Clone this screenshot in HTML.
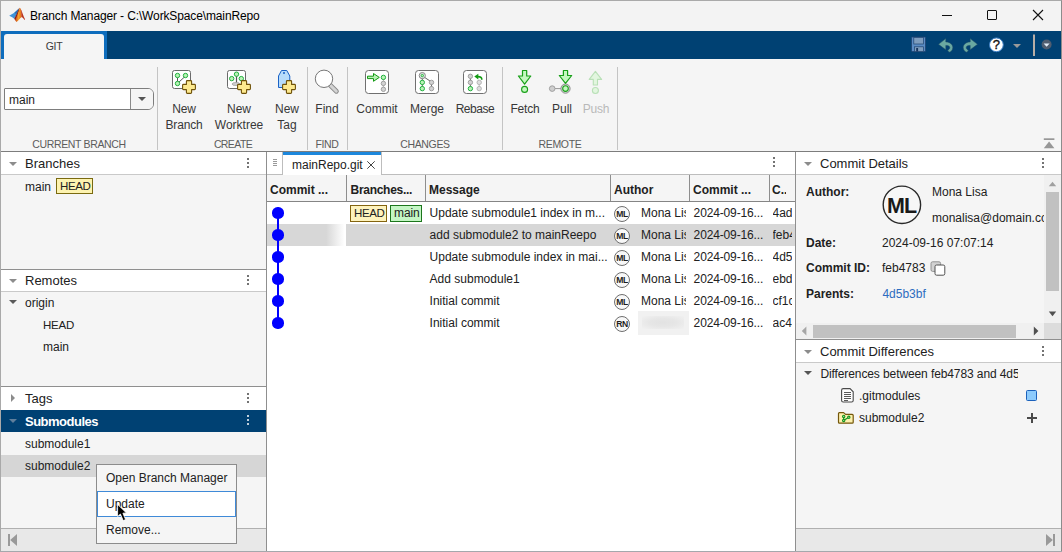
<!DOCTYPE html>
<html lang="en">
<head>
<meta charset="utf-8">
<title>Branch Manager - C:\WorkSpace\mainRepo</title>
<style>
*{box-sizing:border-box;margin:0;padding:0}
html,body{width:1062px;height:552px;overflow:hidden;background:#f3f3f3}
body{font-family:"Liberation Sans",sans-serif;font-size:12px;color:#212121;position:relative}
.abs{position:absolute}
.t{position:absolute;white-space:nowrap;line-height:1}
#win{position:absolute;left:0;top:0;width:1062px;height:552px;background:#f3f3f3;border:1px solid #a9a9a9;border-right-color:#8c8c8c;border-bottom-color:#8c8c8c}
/* title bar */
#title{left:30px;top:10px;font-size:12px;color:#000;letter-spacing:-0.13px}
/* blue strip */
#strip{left:1px;top:31px;width:1060px;height:28px;background:#004173}
#tab{left:1px;top:31px;width:106px;height:28px;background:#0e6dbd}
#tabin{left:4px;top:34px;width:100px;height:25px;background:#f5f5f5;border-radius:3px 3px 0 0}
#tabtxt{left:4px;width:100px;top:41px;text-align:center;font-size:10.5px;color:#3a3a3a;letter-spacing:-0.3px}
/* toolstrip */
#tool{left:1px;top:59px;width:1060px;height:93px;background:#f5f5f5;border-bottom:1px solid #7d7d7d}
.vsep{position:absolute;top:67px;height:83px;width:1px;background:#c4c4c4}
.glabel{position:absolute;top:139px;font-size:10.5px;color:#5c5c5c;white-space:nowrap;text-align:center;line-height:1;letter-spacing:-0.35px}
.blabel{position:absolute;font-size:12px;color:#383838;white-space:nowrap;text-align:center;line-height:16px}
/* panels */
.phead{position:absolute;height:23px;background:#fff;border-bottom:1px solid #c9c9c9}
.phead .ttl{position:absolute;left:24px;top:4px;font-size:13px;line-height:16px;color:#212121;white-space:nowrap}
.dots{position:absolute;width:2px;height:2px;background:#444;border-radius:1px;box-shadow:0 4px 0 #444,0 8px 0 #444}
.tri-d{position:absolute;width:0;height:0;border-left:4px solid transparent;border-right:4px solid transparent;border-top:4px solid #8c8c8c}
.tri-r{position:absolute;width:0;height:0;border-top:4px solid transparent;border-bottom:4px solid transparent;border-left:4px solid #8c8c8c}
.item{position:absolute;font-size:12px;white-space:nowrap;line-height:16px;color:#212121}

.dot{margin:0.4px 0 0 0.4px;width:11.2px;height:11.2px;border-radius:50%;background:#0000ff}
.av{margin:-0.5px 0 0 0.1px;width:16px;height:16px;border-radius:50%;border:1px solid #6e6e6e;background:#f8f8f8;font-size:8.6px;font-weight:bold;text-align:center;line-height:15px;color:#1e1e1e;letter-spacing:-0.45px;text-indent:-0.3px}
.b{font-weight:bold}
.tg{font-size:11.5px;letter-spacing:-0.35px}
.dt{letter-spacing:-0.14px}
.th{margin-top:0.5px}
</style>
</head>
<body>
<div id="win">
</div>
<!-- TITLE BAR -->
<svg class="abs" style="left:8px;top:6px" width="19" height="18" viewBox="8 6 19 18">
  <defs><linearGradient id="lgo" x1="0" y1="0" x2="1" y2="0"><stop offset="0" stop-color="#c8421a"/><stop offset="0.5" stop-color="#f5a32a"/><stop offset="1" stop-color="#e0611c"/></linearGradient></defs>
  <path d="M9.2 15.7 L14.3 12.8 L19 8.6 L17.6 13.2 L14.2 18.7 L12.2 17.3 Z" fill="#3f93d8"/>
  <path d="M14.3 12.8 L19 8.6 L16.4 14 Z" fill="#2a6fb4"/>
  <path d="M19 8.6 L19.8 7.7 L18.2 15.5 L15.4 20.4 L14.2 18.7 L16.6 14 Z" fill="#8f201b"/>
  <path d="M19.8 7.7 C20.6 7.7 21 10 21.6 12.2 L21.8 17 C20 18 18.3 21 16.4 22 L15.2 20.3 C17.3 16 18.6 11.4 19.8 7.7 Z" fill="url(#lgo)"/>
  <path d="M20.4 8.3 C22 11 23.4 16.8 25 19.2 L24.5 19.9 C23.5 18.5 22.6 17.5 21.6 17 L21.2 11.5 Z" fill="#b8331f"/>
</svg>
<div class="t" id="title">Branch Manager - C:\WorkSpace\mainRepo</div>
<!-- window controls -->
<div class="abs" style="left:942px;top:15px;width:10px;height:1px;background:#111"></div>
<div class="abs" style="left:987px;top:10px;width:10px;height:10px;border:1px solid #111;border-radius:1px"></div>
<svg class="abs" style="left:1032px;top:9px" width="12" height="12" viewBox="0 0 12 12"><path d="M1 1 L11 11 M11 1 L1 11" stroke="#111" stroke-width="1.1" fill="none"/></svg>

<!-- BLUE STRIP -->
<div class="abs" id="strip"></div>
<div class="abs" id="tab"></div>
<div class="abs" id="tabin"></div>
<div class="t" id="tabtxt">GIT</div>

<!-- TOOLSTRIP -->
<div class="abs" id="tool"></div>


<!-- combo -->
<div class="abs" style="left:4px;top:88px;width:150px;height:22px;background:#fff;border:1px solid #7d7d7d;border-radius:1px 6px 6px 1px"></div>
<div class="abs" style="left:130px;top:89px;width:23px;height:20px;background:#f5f5f5;border-left:1px solid #8a8a8a;border-radius:0 5px 5px 0"></div>
<div class="abs" style="left:138px;top:97px;width:0;height:0;border-left:4px solid transparent;border-right:4px solid transparent;border-top:4px solid #555"></div>
<div class="t" style="left:9px;top:94px;font-size:12px;color:#1e1e1e">main</div>
<div class="vsep" style="left:157px"></div>
<div class="vsep" style="left:307px"></div>
<div class="vsep" style="left:347px"></div>
<div class="vsep" style="left:502px"></div>
<div class="vsep" style="left:617px"></div>
<div class="glabel" style="left:29px;width:100px">CURRENT BRANCH</div>
<div class="glabel" style="left:183px;width:100px;letter-spacing:-0.6px">CREATE</div>
<div class="glabel" style="left:277px;width:100px">FIND</div>
<div class="glabel" style="left:375px;width:100px">CHANGES</div>
<div class="glabel" style="left:510px;width:100px">REMOTE</div>
<div class="blabel" style="left:144px;width:80px;top:101px;letter-spacing:-0.15px">New<br>Branch</div>
<div class="blabel" style="left:199px;width:80px;top:101px">New<br>Worktree</div>
<div class="blabel" style="left:247px;width:80px;top:101px">New<br>Tag</div>
<div class="blabel" style="left:287px;width:80px;top:101px">Find</div>
<div class="blabel" style="left:337px;width:80px;top:101px">Commit</div>
<div class="blabel" style="left:387px;width:80px;top:101px">Merge</div>
<div class="blabel" style="left:435px;width:80px;top:101px;letter-spacing:-0.45px">Rebase</div>
<div class="blabel" style="left:485px;width:80px;top:101px;letter-spacing:-0.2px">Fetch</div>
<div class="blabel" style="left:522px;width:80px;top:101px">Pull</div>
<div class="blabel" style="left:556px;width:80px;top:101px;color:#b9b9b9;letter-spacing:-0.2px">Push</div>


<!-- toolbar icons -->
<svg class="abs" style="left:160px;top:62px" width="470" height="40" viewBox="160 62 470 40">
<!-- new branch -->
<rect x="172.5" y="70.5" width="18" height="18" rx="2" fill="#fff" stroke="#6a6a6a"/>
<path d="M177.5 77.5 V81.5 M185 76.5 L178.5 82.5" stroke="#555" stroke-width="1" fill="none"/>
<circle cx="177.5" cy="75.5" r="2.2" fill="#b9f2b5" stroke="#21b13f" stroke-width="1"/><circle cx="185.5" cy="75.5" r="2.2" fill="#b9f2b5" stroke="#21b13f" stroke-width="1"/><circle cx="177.5" cy="83.5" r="2.2" fill="#b9f2b5" stroke="#21b13f" stroke-width="1"/>
<path d="M187.3 80.6 H190.7 Q191.6 80.6 191.6 81.5 V84.4 H194.5 Q195.4 84.4 195.4 85.3 V88.7 Q195.4 89.6 194.5 89.6 H191.6 V92.5 Q191.6 93.4 190.7 93.4 H187.3 Q186.4 93.4 186.4 92.5 V89.6 H183.5 Q182.6 89.6 182.6 88.7 V85.3 Q182.6 84.4 183.5 84.4 H186.4 V81.5 Q186.4 80.6 187.3 80.6 Z" fill="#fde98e" stroke="#6f5108" stroke-width="1.1" stroke-linejoin="round"/>
<!-- new worktree -->
<rect x="227.5" y="70.5" width="18" height="18" rx="2" fill="#fff" stroke="#6a6a6a"/>
<path d="M236.5 76 V83" stroke="#555" stroke-width="1.2" fill="none"/>
<ellipse cx="236" cy="84" rx="4" ry="1.5" fill="#cfcfcf" stroke="#a5a5a5" stroke-width="0.8"/>
<circle cx="236.5" cy="74.2" r="2.2" fill="#b9f2b5" stroke="#21b13f" stroke-width="1"/><circle cx="231.7" cy="78.6" r="2.2" fill="#b9f2b5" stroke="#21b13f" stroke-width="1"/><circle cx="241.3" cy="78.6" r="2.2" fill="#b9f2b5" stroke="#21b13f" stroke-width="1"/>
<path d="M242.3 80.6 H245.7 Q246.6 80.6 246.6 81.5 V84.4 H249.5 Q250.4 84.4 250.4 85.3 V88.7 Q250.4 89.6 249.5 89.6 H246.6 V92.5 Q246.6 93.4 245.7 93.4 H242.3 Q241.4 93.4 241.4 92.5 V89.6 H238.5 Q237.6 89.6 237.6 88.7 V85.3 Q237.6 84.4 238.5 84.4 H241.4 V81.5 Q241.4 80.6 242.3 80.6 Z" fill="#fde98e" stroke="#6f5108" stroke-width="1.1" stroke-linejoin="round"/>
<!-- new tag -->
<path d="M278.5 87.5 V76 L281.5 70.5 H286.8 L289.8 76 V87.5 Z" fill="#b7dcfb" stroke="#1a62c6" stroke-width="1" stroke-linejoin="round"/>
<circle cx="284" cy="73" r="1" fill="#1a62c6"/>
<path d="M287.3 80.6 H290.7 Q291.6 80.6 291.6 81.5 V84.4 H294.5 Q295.4 84.4 295.4 85.3 V88.7 Q295.4 89.6 294.5 89.6 H291.6 V92.5 Q291.6 93.4 290.7 93.4 H287.3 Q286.4 93.4 286.4 92.5 V89.6 H283.5 Q282.6 89.6 282.6 88.7 V85.3 Q282.6 84.4 283.5 84.4 H286.4 V81.5 Q286.4 80.6 287.3 80.6 Z" fill="#fde98e" stroke="#6f5108" stroke-width="1.1" stroke-linejoin="round"/>
<!-- find -->
<path d="M330 85 L336.4 91.3" stroke="#8a8a8a" stroke-width="4.8" stroke-linecap="round"/>
<path d="M330.3 85.3 L336.3 91.2" stroke="#d4d4d4" stroke-width="3" stroke-linecap="round"/>
<circle cx="324" cy="78.8" r="8.7" fill="#fff" stroke="#777" stroke-width="1"/>
<!-- commit -->
<rect x="365.5" y="70.5" width="23" height="23" rx="3" fill="#fff" stroke="#707070"/>
<path d="M367.5 76.2 H373.5 V73.5 L379.3 77.4 L373.5 81.3 V78.6 H367.5 Z" fill="#b9f2b5" stroke="#129a12" stroke-width="1" stroke-linejoin="round"/>
<path d="M383.4 79 V88" stroke="#bbb" stroke-width="1"/>
<circle cx="383.4" cy="77.4" r="2.2" fill="#b9f2b5" stroke="#21b13f" stroke-width="1"/><circle cx="383.4" cy="83.4" r="2.2" fill="#d2d2d2" stroke="#a0a0a0" stroke-width="1"/><circle cx="383.4" cy="89.3" r="2.2" fill="#d2d2d2" stroke="#a0a0a0" stroke-width="1"/>
<!-- merge -->
<rect x="415.5" y="70.5" width="23" height="23" rx="3" fill="#fff" stroke="#707070"/>
<path d="M422.3 76 V88 M424 77 L431.5 82 V88" stroke="#666" stroke-width="1" fill="none"/>
<circle cx="422.3" cy="75.6" r="3.1" fill="#e4e4e4" stroke="#8a8a8a"/><circle cx="422.3" cy="75.6" r="1.2" fill="#b9f2b5" stroke="#21b13f" stroke-width="0.9"/>
<circle cx="422.3" cy="82.4" r="2.2" fill="#b9f2b5" stroke="#21b13f" stroke-width="1"/><circle cx="422.3" cy="88.6" r="2.2" fill="#b9f2b5" stroke="#21b13f" stroke-width="1"/>
<circle cx="431.5" cy="82.4" r="2.2" fill="#d2d2d2" stroke="#a0a0a0" stroke-width="1"/><circle cx="431.5" cy="88.6" r="2.2" fill="#d2d2d2" stroke="#a0a0a0" stroke-width="1"/>
<!-- rebase -->
<rect x="463.5" y="70.5" width="23" height="23" rx="3" fill="#fff" stroke="#707070"/>
<path d="M470.4 77 V88" stroke="#666" stroke-width="1"/><path d="M479.2 83 V88" stroke="#bbb" stroke-width="1"/>
<circle cx="470.4" cy="76.3" r="2.2" fill="#d2d2d2" stroke="#a0a0a0" stroke-width="1"/><circle cx="470.4" cy="82.4" r="2.2" fill="#d2d2d2" stroke="#a0a0a0" stroke-width="1"/><circle cx="470.4" cy="88.6" r="2.2" fill="#b9f2b5" stroke="#21b13f" stroke-width="1"/>
<circle cx="479.2" cy="82.4" r="2.2" fill="#dedede" stroke="#b5b5b5"/><circle cx="479.2" cy="88.6" r="2.2" fill="#dedede" stroke="#b5b5b5"/>
<path d="M481.8 79.8 Q482 76.6 478 76.6" stroke="#129a12" stroke-width="1.6" fill="none"/>
<path d="M474.3 76.6 L478.3 73.8 V79.4 Z" fill="#129a12"/>
<!-- fetch -->
<path d="M522.5 70.5 H526.7 V76 H530.8 L524.6 84.2 L518.4 76 H522.5 Z" fill="#c3f8bf" stroke="#18a018" stroke-width="1.2" stroke-linejoin="round"/>
<circle cx="524.6" cy="89.4" r="3" fill="#c3f8bf" stroke="#18a018" stroke-width="1.1"/>
<!-- pull -->
<path d="M555 88.6 H561" stroke="#999" stroke-width="1"/>
<circle cx="552.2" cy="88.6" r="2.8" fill="#cfcfcf" stroke="#a0a0a0"/>
<circle cx="565.5" cy="88.6" r="4.6" fill="#d9d9d9" stroke="#8a8a8a"/>
<circle cx="565.5" cy="88.6" r="2.8" fill="#c3f8bf" stroke="#18a018" stroke-width="1.1"/>
<path d="M563.4 70.5 H567.6 V75.5 H571.7 L565.5 83.4 L559.3 75.5 H563.4 Z" fill="#c3f8bf" stroke="#18a018" stroke-width="1.2" stroke-linejoin="round"/>
<!-- push -->
<path d="M593.3 85 H597.5 V79.4 H601.6 L595.4 71.4 L589.2 79.4 H593.3 Z" fill="#e2f6df" stroke="#b9e0b7" stroke-width="1.1" stroke-linejoin="round"/>
<circle cx="595.4" cy="90.5" r="3" fill="#e2f6df" stroke="#b9e0b7" stroke-width="1.1"/>
</svg>
<!-- collapse icon -->
<svg class="abs" style="left:1043px;top:138px" width="12" height="11" viewBox="0 0 12 11"><rect x="0.8" y="0.3" width="10.6" height="1.7" fill="#979797"/><path d="M6.1 3.6 L11.4 10.2 H0.8 Z" fill="#979797"/></svg>
<!-- quick access -->
<svg class="abs" style="left:905px;top:32px" width="156" height="26" viewBox="905 32 156 26">
<rect x="911.5" y="37" width="14" height="14.6" rx="0.8" fill="#5b8cc4" stroke="#1f426e" stroke-width="0.8"/>
<rect x="913.8" y="37.4" width="9.6" height="6.6" fill="#7e9dbe" stroke="#1f426e" stroke-width="0.7"/>
<rect x="914.6" y="46.8" width="8.8" height="4.8" fill="#7e9dbe" stroke="#1f426e" stroke-width="0.7"/>
<rect x="916.2" y="48" width="1.9" height="3.4" fill="#14335c"/>
<path d="M938.5 44.3 L945.8 38.6 V42 C950 42 952.8 44.5 952.8 47.5 C952.8 50 951 51.8 949 52.3 L947.6 50.2 C949 49.6 949.8 48.7 949.8 47.5 C949.8 46 948.3 45.4 945.8 45.4 V49.8 Z" fill="#6aa9a1" stroke="#1f4a66" stroke-width="0.5"/>
<path d="M 977.5 44.3 L 970.2 38.6 V 42.0 C 966.0 42.0 963.2 44.5 963.2 47.5 C 963.2 50.0 965.0 51.8 967.0 52.3 L 968.4 50.2 C 967.0 49.6 966.2 48.7 966.2 47.5 C 966.2 46.0 967.7 45.4 970.2 45.4 V 49.8 Z" fill="#6aa9a1" stroke="#1f4a66" stroke-width="0.5"/>
<circle cx="996.4" cy="44.8" r="6.9" fill="#fff" stroke="#3d7fc4" stroke-width="1"/>
<text x="996.4" y="49.4" text-anchor="middle" font-family="Liberation Sans, sans-serif" font-size="13" fill="#111" stroke="#111" stroke-width="0.35">?</text>
<path d="M1013 44 H1021 L1017 48 Z" fill="#9a9a9a"/>
<rect x="1033" y="34.5" width="2" height="21.5" fill="#b8aea6"/>
<circle cx="1046.6" cy="44.5" r="5" fill="#505d70"/>
<path d="M1043.6 43.4 H1049.6 L1046.6 46.8 Z" fill="#e4eefa"/>
</svg>

<!-- LEFT PANEL -->
<div class="abs" style="left:1px;top:152px;width:265px;height:399px;background:#f5f5f5"></div>
<div class="abs" style="left:266px;top:152px;width:1px;height:399px;background:#8f8f8f"></div>
<div class="phead" style="left:1px;top:152px;width:265px"><div class="tri-d" style="left:8px;top:10px"></div><div class="ttl">Branches</div><div class="dots" style="left:246px;top:6px"></div></div>
<div class="item" style="left:25px;top:179px">main</div>
<div class="abs" style="left:56px;top:178px;width:37px;height:16px;background:#fdf3b0;border:1px solid #7a6a10"></div>
<div class="item tg" style="left:60px;top:178px">HEAD</div>

<div class="phead" style="left:1px;top:269px;width:265px;border-top:1px solid #8f8f8f;height:23px"><div class="tri-d" style="left:8px;top:9px"></div><div class="ttl" style="top:3px">Remotes</div><div class="dots" style="left:246px;top:5px"></div></div>
<div class="tri-d" style="left:9px;top:300px;border-top-color:#5a5a5a"></div>
<div class="item" style="left:25px;top:295px">origin</div>
<div class="item tg" style="left:43px;top:317px;letter-spacing:-0.25px">HEAD</div>
<div class="item" style="left:43px;top:339px">main</div>

<div class="phead" style="left:1px;top:386px;width:265px;border-top:1px solid #8f8f8f;border-bottom:none;height:24px"><div class="tri-r" style="left:10px;top:7px"></div><div class="ttl" style="top:4px">Tags</div><div class="dots" style="left:246px;top:6px"></div></div>
<div class="phead" style="left:1px;top:410px;width:265px;height:22px;background:#004173;border-bottom:none"><div class="tri-d" style="left:8px;top:9px;border-top-color:#5f7f9c"></div><div class="ttl" style="top:3.5px;color:#fff;font-weight:bold;font-size:13px;letter-spacing:-0.5px">Submodules</div><div class="dots" style="left:246px;top:5px;background:#fff;box-shadow:0 4px 0 #fff,0 8px 0 #fff"></div></div>
<div class="item" style="left:25px;top:436px">submodule1</div>
<div class="abs" style="left:1px;top:455px;width:265px;height:22px;background:#d6d6d6"></div>
<div class="item" style="left:25px;top:458px">submodule2</div>
<div class="abs" style="left:1px;top:528px;width:265px;height:23px;background:#e8e8e8;border-top:1px solid #b0b0b0"></div>
<svg class="abs" style="left:8px;top:534px" width="9" height="12" viewBox="0 0 9 12"><rect x="0" y="0" width="2" height="12" fill="#999"/><path d="M9 0 V12 L2.2 6 Z" fill="#999"/></svg>

<!-- context menu -->
<div class="abs" style="left:96px;top:464px;width:141px;height:80px;background:#f5f5f5;border:1px solid #8c8c8c"></div>
<div class="abs" style="left:97px;top:491px;width:139px;height:26px;background:#fff;border:1px solid #3f8ad8"></div>
<div class="item" style="left:106px;top:470px;font-size:12px">Open Branch Manager</div>
<div class="item" style="left:106px;top:496px;font-size:12px">Update</div>
<div class="item" style="left:106px;top:522px;font-size:12px">Remove...</div>
<svg class="abs" style="left:115px;top:502px" width="14" height="21" viewBox="115 502 14 21"><path d="M117.6 504.4 V516.6 L120.4 514 L123.2 520.6 L125.6 519.6 L122.9 513.2 L126.4 512.9 Z" fill="#000" stroke="#fff" stroke-width="0.8" stroke-linejoin="round"/></svg>

<!-- CENTER PANEL -->
<div class="abs" style="left:267px;top:152px;width:528px;height:399px;background:#fff"></div>
<div class="abs" style="left:267px;top:152px;width:528px;height:23px;background:#fff;border-bottom:1px solid #bdbdbd"></div>
<div class="abs" style="left:282px;top:152px;width:100px;height:23px;background:#fff;border-right:1px solid #bdbdbd;border-left:1px solid #bdbdbd"></div><div class="abs" style="left:283px;top:152px;width:98px;height:2.5px;background:#1c87dc"></div>
<div class="item" style="left:292px;top:157px;font-size:12px">mainRepo.git</div>
<svg class="abs" style="left:367px;top:161px" width="8" height="8" viewBox="0 0 8 8"><path d="M0.3 0.3 L7.7 7.7 M7.7 0.3 L0.3 7.7" stroke="#444" stroke-width="1" fill="none"/></svg>
<div class="abs" style="left:273px;top:159px;width:4px;height:1px;background:#9a9a9a;box-shadow:0 2px 0 #9a9a9a,0 4px 0 #9a9a9a,0 6px 0 #9a9a9a"></div>
<div class="dots" style="left:773px;top:157px"></div>
<!-- table header -->
<div class="abs" style="left:267px;top:175px;width:528px;height:27px;background:#f5f5f5;border-bottom:1px solid #858585"></div>
<div class="abs" style="left:346px;top:175px;width:1px;height:26px;background:#8e8e8e"></div>
<div class="abs" style="left:425px;top:175px;width:1px;height:26px;background:#8e8e8e"></div>
<div class="abs" style="left:610px;top:175px;width:1px;height:26px;background:#8e8e8e"></div>
<div class="abs" style="left:689px;top:175px;width:1px;height:26px;background:#8e8e8e"></div>
<div class="abs" style="left:769px;top:175px;width:1px;height:26px;background:#8e8e8e"></div>
<div class="item th" style="left:270px;top:181px;font-weight:bold">Commit ...</div>
<div class="item th" style="left:350.6px;top:181px;font-weight:bold;letter-spacing:-0.3px">Branches...</div>
<div class="item th" style="left:429px;top:181px;font-weight:bold">Message</div>
<div class="item th" style="left:614px;top:181px;font-weight:bold">Author</div>
<div class="item th" style="left:693px;top:181px;font-weight:bold">Commit ...</div>
<div class="item th" style="left:772px;top:181px;font-weight:bold;width:14px;overflow:hidden">C...</div>
<!-- rows -->
<div class="abs" style="left:267px;top:224px;width:79px;height:22px;background:linear-gradient(to right,#d7d7d7 0,#d7d7d7 75%,#fff 98%)"></div>
<div class="abs" style="left:346px;top:224px;width:449px;height:22px;background:#d7d7d7"></div>
<div class="abs" style="left:277px;top:213px;width:2px;height:110px;background:#0000ff"></div>
<div id="rows">
<div class="abs dot" style="left:272px;top:207px"></div>
<div class="item msg" style="left:429.6px;top:205px">Update submodule1 index in m...</div>
<div class="abs av" style="left:614px;top:206px">ML</div>
<div class="item nm" style="left:641px;top:205px;width:45px;overflow:hidden">Mona Lisa</div>
<div class="item dt" style="left:693.6px;top:205px">2024-09-16...</div>
<div class="item hs" style="left:772.5px;top:205px;width:19.5px;overflow:hidden">4ad</div>
<div class="abs dot" style="left:272px;top:229px"></div>
<div class="item msg" style="left:429.6px;top:227px">add submodule2 to mainReepo</div>
<div class="abs av" style="left:614px;top:228px">ML</div>
<div class="item nm" style="left:641px;top:227px;width:45px;overflow:hidden">Mona Lisa</div>
<div class="item dt" style="left:693.6px;top:227px">2024-09-16...</div>
<div class="item hs" style="left:772.5px;top:227px;width:19.5px;overflow:hidden">feb4</div>
<div class="abs dot" style="left:272px;top:251px"></div>
<div class="item msg" style="left:429.6px;top:249px">Update submodule index in mai...</div>
<div class="abs av" style="left:614px;top:250px">ML</div>
<div class="item nm" style="left:641px;top:249px;width:45px;overflow:hidden">Mona Lisa</div>
<div class="item dt" style="left:693.6px;top:249px">2024-09-16...</div>
<div class="item hs" style="left:772.5px;top:249px;width:19.5px;overflow:hidden">4d5</div>
<div class="abs dot" style="left:272px;top:273px"></div>
<div class="item msg" style="left:429.6px;top:271px">Add submodule1</div>
<div class="abs av" style="left:614px;top:272px">ML</div>
<div class="item nm" style="left:641px;top:271px;width:45px;overflow:hidden">Mona Lisa</div>
<div class="item dt" style="left:693.6px;top:271px">2024-09-16...</div>
<div class="item hs" style="left:772.5px;top:271px;width:19.5px;overflow:hidden">ebd</div>
<div class="abs dot" style="left:272px;top:295px"></div>
<div class="item msg" style="left:429.6px;top:293px">Initial commit</div>
<div class="abs av" style="left:614px;top:294px">ML</div>
<div class="item nm" style="left:641px;top:293px;width:45px;overflow:hidden">Mona Lisa</div>
<div class="item dt" style="left:693.6px;top:293px">2024-09-16...</div>
<div class="item hs" style="left:772.5px;top:293px;width:19.5px;overflow:hidden">cf1c</div>
<div class="abs dot" style="left:272px;top:317px"></div>
<div class="item msg" style="left:429.6px;top:315px">Initial commit</div>
<div class="abs av" style="left:614px;top:316px">RN</div>
<div class="abs" style="left:638px;top:311px;width:51px;height:24px;background:#f1f1f1"></div><div class="abs" style="left:642px;top:316px;width:42px;height:13px;background:radial-gradient(ellipse at center,#e2e2e2 0,#e6e6e6 45%,#f1f1f1 100%)"></div>
<div class="item dt" style="left:693.6px;top:315px">2024-09-16...</div>
<div class="item hs" style="left:772.5px;top:315px;width:19.5px;overflow:hidden">ac4a</div>
<div class="abs" style="left:350px;top:205px;width:37px;height:17px;background:#fef3bd;border:1px solid #84640f"></div><div class="item tg" style="left:354px;top:205px">HEAD</div>
<div class="abs" style="left:390px;top:205px;width:32px;height:17px;background:#c4f6c4;border:1px solid #1c761c"></div><div class="item" style="left:394px;top:205px;letter-spacing:-0.1px">main</div>
</div>

<!-- RIGHT PANEL -->
<div class="abs" style="left:795px;top:152px;width:1px;height:399px;background:#8f8f8f"></div>
<div class="abs" style="left:796px;top:152px;width:265px;height:399px;background:#f5f5f5"></div>
<div class="phead" style="left:796px;top:152px;width:265px"><div class="tri-d" style="left:8px;top:10px"></div><div class="ttl">Commit Details</div><div class="dots" style="left:246px;top:6px"></div></div>
<div id="details">
<div class="item b" style="left:806px;top:184px">Author:</div>
<svg class="abs" style="left:881px;top:184px" width="42" height="42" viewBox="881 184 42 42"><circle cx="901.9" cy="204.8" r="18.7" fill="#f7f7f7" stroke="#2a2a2a" stroke-width="1.4"/></svg>
<div class="t" style="left:883px;width:38px;top:195.6px;text-align:center;font-size:21.5px;font-weight:bold;color:#1a1a1a;letter-spacing:-0.9px;text-indent:-0.6px">ML</div>
<div class="item" style="left:932px;top:184px">Mona Lisa</div>
<div class="item" style="left:932px;top:210px;width:113px;overflow:hidden">monalisa@domain.com</div>
<div class="item b" style="left:806px;top:235px">Date:</div>
<div class="item" style="left:882px;top:235px">2024-09-16 07:07:14</div>
<div class="item b" style="left:806px;top:260px">Commit ID:</div>
<div class="item" style="left:882px;top:260px">feb4783</div>
<svg class="abs" style="left:930px;top:261px" width="16" height="16" viewBox="930 261 16 16"><rect x="931" y="261.8" width="9.6" height="9.6" rx="1.6" fill="#d2d2d2" stroke="#8a8a8a" stroke-width="0.9"/><rect x="935" y="265" width="9.8" height="10.2" rx="1.6" fill="#fff" stroke="#505050" stroke-width="1"/></svg>
<div class="item b" style="left:806px;top:286px">Parents:</div>
<div class="item" style="left:882.4px;top:286px;color:#2d6cc0">4d5b3bf</div>
<!-- v scrollbar -->
<div class="abs" style="left:1044px;top:175px;width:17px;height:148px;background:#f0f0f0"></div>
<div class="abs" style="left:1046px;top:192px;width:13px;height:99px;background:#c1c1c1"></div>


<!-- h scrollbar -->
<div class="abs" style="left:796px;top:323px;width:248px;height:16px;background:#f0f0f0"></div>
<div class="abs" style="left:813px;top:325px;width:203px;height:13px;background:#c1c1c1"></div>


<div class="abs" style="left:1044px;top:323px;width:17px;height:16px;background:#dcdcdc"></div>
<svg class="abs" style="left:796px;top:175px" width="266" height="165" viewBox="796 175 266 165"><path d="M1048.8 186.3 H1056.2 L1052.5 181.8 Z" fill="#a0a0a0"/><path d="M1048.8 311.6 H1056.2 L1052.5 316.2 Z" fill="#505050"/><path d="M1033.8 326.6 V335.4 L1038.4 331 Z" fill="#505050"/><path d="M806.4 326.6 V335.4 L801.8 331 Z" fill="#a6a6a6"/></svg></div>
<div class="phead" style="left:796px;top:339px;width:265px;border-top:1px solid #8f8f8f;height:24px"><div class="tri-d" style="left:8px;top:10px"></div><div class="ttl" style="top:4px">Commit Differences</div><div class="dots" style="left:246px;top:6px"></div></div>
<div id="diffs">
<div class="tri-d" style="left:804px;top:371px;border-top-color:#555"></div>
<div class="item" style="left:820.4px;top:366px;width:197.6px;overflow:hidden;letter-spacing:-0.1px">Differences between feb4783 and 4d5b3bf</div>
<svg class="abs" style="left:840px;top:387px" width="16" height="17" viewBox="840 387 16 17"><path d="M843.2 388.6 H850 L853.2 391.8 V400.4 Q853.2 402 851.6 402 H843.2 Q841.6 402 841.6 400.4 V390.2 Q841.6 388.6 843.2 388.6 Z" fill="#fff" stroke="#4a4a4a" stroke-width="1.1"/><path d="M844 392.5 H851 M844 394.5 H851 M844 396.5 H851 M844 398.5 H851 M844 400.5 H847.6" stroke="#5a5a5a" stroke-width="1" shape-rendering="crispEdges"/></svg>
<div class="item" style="left:859px;top:388px">.gitmodules</div>
<div class="abs" style="left:1026px;top:390px;width:11px;height:11px;background:#8dcbfc;border:1px solid #1c62bc;border-radius:1.5px"></div>
<svg class="abs" style="left:837px;top:411px" width="18" height="14" viewBox="837 411 18 14"><path d="M839.4 412.6 H843.6 L845.6 414.4 H852.2 Q853.2 414.4 853.2 415.4 V422.2 Q853.2 423.2 852.2 423.2 H839.4 Q838.5 423.2 838.5 422.2 V413.6 Q838.5 412.6 839.4 412.6 Z" fill="#fdf0ae" stroke="#74570b" stroke-width="1.2" stroke-linejoin="round"/><path d="M843.7 417.4 V419.4 M844.4 420 L848 417.8" stroke="#0f9420" stroke-width="1.15" fill="none"/><circle cx="843.7" cy="416.4" r="1.15" fill="#c8e8a0" stroke="#0f9420" stroke-width="1.15"/><circle cx="843.7" cy="420.5" r="1.15" fill="#c8e8a0" stroke="#0f9420" stroke-width="1.15"/><circle cx="848.8" cy="417.3" r="1.15" fill="#c8e8a0" stroke="#0f9420" stroke-width="1.15"/></svg>
<div class="item" style="left:859px;top:410px">submodule2</div>
<div class="abs" style="left:1027px;top:417px;width:10px;height:2px;background:#4a4a4a"></div>
<div class="abs" style="left:1031px;top:413px;width:2px;height:10px;background:#4a4a4a"></div>
</div>
<div class="abs" style="left:796px;top:528px;width:265px;height:23px;background:#e8e8e8;border-top:1px solid #b0b0b0"></div>
<svg class="abs" style="left:1046px;top:534px" width="9" height="12" viewBox="0 0 9 12"><rect x="7" y="0" width="2" height="12" fill="#999"/><path d="M0 0 V12 L6.8 6 Z" fill="#999"/></svg>
<!-- bottom edge -->
<div class="abs" style="left:0;top:551px;width:1062px;height:1px;background:#a4a8ac"></div>

</body>
</html>
